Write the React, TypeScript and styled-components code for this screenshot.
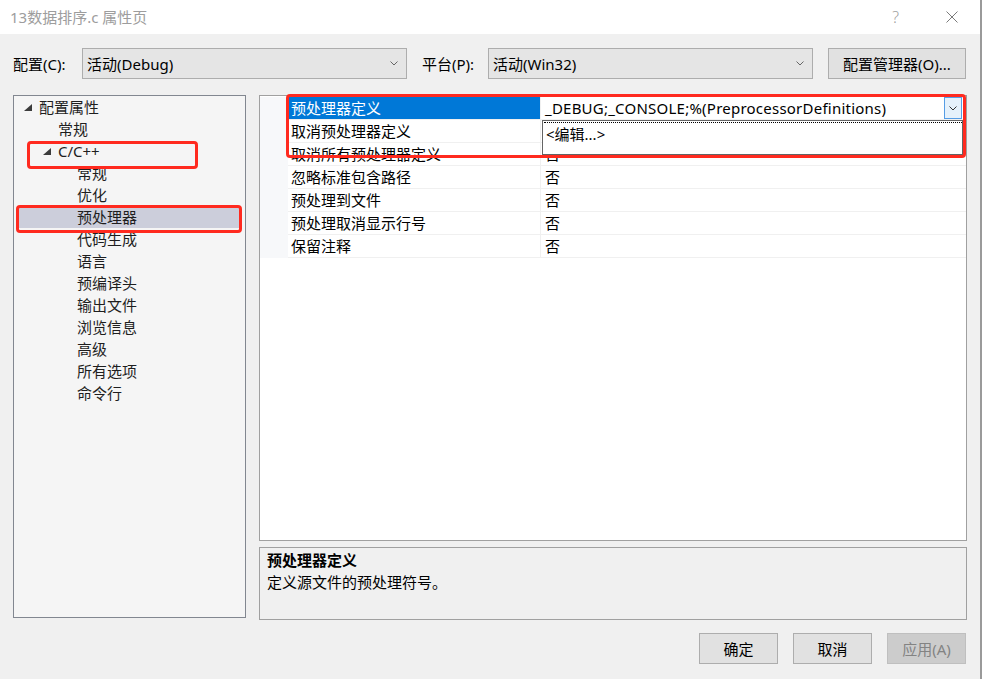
import React from "react";
import styled, { createGlobalStyle } from "styled-components";

const GlobalStyle = createGlobalStyle`
  html, body {
    margin: 0;
    padding: 0;
    background: #f0f0f0;
  }
  body {
    font-family: "Noto Sans", "Noto Sans CJK SC", sans-serif;
    font-size: 15px;
    color: #000;
  }
  * { box-sizing: border-box; }
`;

const Window = styled.div`
  position: relative;
  width: 982px;
  height: 679px;
  background: #f0f0f0;
  border-right: 2px solid #9a9a9a;
  overflow: hidden;
`;

const TitleBar = styled.div`
  height: 34px;
  background: #fff;
  display: flex;
  align-items: center;
  padding-left: 10px;
`;

const Title = styled.div`
  flex: 1;
  color: #9d9d9d;
  font-size: 15px;
  line-height: 20px;
`;

const TitleButtons = styled.div`
  display: flex;
  align-items: center;
  gap: 47px;
  padding-right: 22px;
`;

const HelpGlyph = styled.span`
  color: #a0a0a0;
  font-size: 16px;
  line-height: 20px;
  font-weight: 300;
`;

const ConfigRow = styled.div`
  display: flex;
  align-items: center;
  height: 31px;
  margin-top: 14px;
  padding-left: 13px;
`;

const FieldLabel = styled.span<{ $gap?: number }>`
  margin-left: ${(p) => p.$gap ?? 0}px;
  width: ${(p) => (p.$gap ? 66 : 69)}px;
  line-height: 20px;
`;

const Combo = styled.div<{ $width: number }>`
  width: ${(p) => p.$width}px;
  height: 31px;
  background: #e5e5e5;
  border: 1px solid #adadad;
  display: flex;
  align-items: center;
  padding: 0 8px 0 4px;
  line-height: 20px;
  span {
    flex: 1;
  }
`;

const PushButton = styled.button<{ $width: number; $disabled?: boolean }>`
  width: ${(p) => p.$width}px;
  height: 31px;
  background: ${(p) => (p.$disabled ? "#cccccc" : "#e1e1e1")};
  border: 1px solid ${(p) => (p.$disabled ? "#bfbfbf" : "#adadad")};
  color: ${(p) => (p.$disabled ? "#838383" : "#000")};
  font-family: inherit;
  font-size: 15px;
  line-height: 20px;
  padding: 0;
`;

const Main = styled.div`
  display: flex;
  align-items: flex-start;
  margin-top: 16px;
  padding-left: 13px;
  gap: 13px;
`;

const Tree = styled.div`
  width: 233px;
  height: 523px;
  background: #f5f5f5;
  border: 1px solid #828790;
`;

const TreeRow = styled.div<{ $level: number; $selected?: boolean }>`
  position: relative;
  height: 22px;
  line-height: 22px;
  margin: 0 4px;
  padding-left: ${(p) => 21 + p.$level * 19}px;
  background: ${(p) => (p.$selected ? "#cccedb" : "transparent")};
  color: #1e1e1e;
  display: flex;
  align-items: center;
`;

const Expander = styled.svg`
  width: 8px;
  height: 7px;
  margin-left: -15px;
  margin-right: 7px;
  margin-top: 1px;
`;

const RightColumn = styled.div`
  width: 708px;
  display: flex;
  flex-direction: column;
  gap: 6px;
`;

const PropertyGrid = styled.div`
  position: relative;
  height: 446px;
  background: #fff;
  border: 1px solid #a0a0a0;
  padding-top: 1px;
`;

const PropRow = styled.div`
  display: flex;
  height: 23px;
`;

const Gutter = styled.div`
  width: 28px;
  background: #f7f8fa;
`;

const NameCell = styled.div<{ $selected?: boolean }>`
  width: 253px;
  padding-left: 3px;
  line-height: 22px;
  border-bottom: 1px solid #f0f0f0;
  border-right: 1px solid #f0f0f0;
  background: ${(p) => (p.$selected ? "#0078d7" : "#fff")};
  color: ${(p) => (p.$selected ? "#fff" : "#000")};
  white-space: nowrap;
`;

const ValueCell = styled.div`
  flex: 1;
  display: flex;
  align-items: flex-start;
  padding-left: 4px;
  padding-right: 4px;
  line-height: 22px;
  border-bottom: 1px solid #f0f0f0;
  span {
    flex: 1;
    letter-spacing: 0.23px;
  }
`;

const DropButton = styled.div`
  width: 18px;
  height: 22px;
  background: #e5f1fb;
  border: 1px solid #569de5;
  display: flex;
  align-items: center;
  justify-content: center;
`;

const DropList = styled.div`
  position: absolute;
  left: 282px;
  top: 24px;
  width: 421px;
  height: 35px;
  background: #fff;
  border: 1px solid #646464;
`;

const DropItem = styled.div`
  margin: 1px 0 0 1px;
  height: 22px;
  line-height: 22px;
  padding-left: 2px;
  border-top: 1px dotted #000;
`;

const Description = styled.div`
  height: 73px;
  border: 1px solid #a0a0a0;
  background: #f0f0f0;
  padding: 1px 7px;
  line-height: 22px;
`;

const DescTitle = styled.div`
  font-weight: 700;
`;

const Footer = styled.div`
  display: flex;
  justify-content: flex-end;
  gap: 15px;
  margin-top: 13px;
  padding-right: 14px;
`;

const Callout = styled.div<{ $x: number; $y: number; $w: number; $h: number }>`
  position: absolute;
  left: ${(p) => p.$x}px;
  top: ${(p) => p.$y}px;
  width: ${(p) => p.$w}px;
  height: ${(p) => p.$h}px;
  border: 3px solid #ff2a1f;
  border-radius: 4px;
  pointer-events: none;
`;

const Chevron = ({ color = "#666" }: { color?: string }) => (
  <svg width="8" height="5" viewBox="0 0 8 5">
    <polyline points="0.5,0.5 4,4 7.5,0.5" fill="none" stroke={color} strokeWidth="1" />
  </svg>
);

const Triangle = () => (
  <Expander viewBox="0 0 8 7">
    <polygon points="8,0 8,7 0,7" fill="#3c3c3c" />
  </Expander>
);

type TreeItem = { label: string; level: number; open?: boolean; selected?: boolean };

const treeItems: TreeItem[] = [
  { label: "配置属性", level: 0, open: true },
  { label: "常规", level: 1 },
  { label: "C/C++", level: 1, open: true },
  { label: "常规", level: 2 },
  { label: "优化", level: 2 },
  { label: "预处理器", level: 2, selected: true },
  { label: "代码生成", level: 2 },
  { label: "语言", level: 2 },
  { label: "预编译头", level: 2 },
  { label: "输出文件", level: 2 },
  { label: "浏览信息", level: 2 },
  { label: "高级", level: 2 },
  { label: "所有选项", level: 2 },
  { label: "命令行", level: 2 },
];

const properties = [
  { name: "预处理器定义", value: "_DEBUG;_CONSOLE;%(PreprocessorDefinitions)" },
  { name: "取消预处理器定义", value: "" },
  { name: "取消所有预处理器定义", value: "否" },
  { name: "忽略标准包含路径", value: "否" },
  { name: "预处理到文件", value: "否" },
  { name: "预处理取消显示行号", value: "否" },
  { name: "保留注释", value: "否" },
];

const App: React.FC = () => {
  return (
    <>
      <GlobalStyle />
      <Window>
        <TitleBar>
          <Title>13数据排序.c 属性页</Title>
          <TitleButtons>
            <HelpGlyph>?</HelpGlyph>
            <svg width="12" height="12" viewBox="0 0 12 12">
              <path d="M0.5 0.5 L11.5 11.5 M11.5 0.5 L0.5 11.5" stroke="#7a7a7a" strokeWidth="1" />
            </svg>
          </TitleButtons>
        </TitleBar>

        <ConfigRow>
          <FieldLabel>配置(C):</FieldLabel>
          <Combo $width={325}>
            <span>活动(Debug)</span>
            <Chevron />
          </Combo>
          <FieldLabel $gap={15}>平台(P):</FieldLabel>
          <Combo $width={325}>
            <span>活动(Win32)</span>
            <Chevron />
          </Combo>
          <div style={{ width: 15 }} />
          <PushButton $width={138}>配置管理器(O)...</PushButton>
        </ConfigRow>

        <Main>
          <Tree>
            {treeItems.map((item, i) => (
              <TreeRow key={i} $level={item.level} $selected={item.selected}>
                {item.open && <Triangle />}
                {item.label}
              </TreeRow>
            ))}
          </Tree>

          <RightColumn>
            <PropertyGrid>
              {properties.map((prop, i) => (
                <PropRow key={prop.name}>
                  <Gutter />
                  <NameCell $selected={i === 0}>{prop.name}</NameCell>
                  <ValueCell>
                    <span>{prop.value}</span>
                    {i === 0 && (
                      <DropButton>
                        <Chevron color="#333" />
                      </DropButton>
                    )}
                  </ValueCell>
                </PropRow>
              ))}
              <DropList>
                <DropItem>&lt;编辑...&gt;</DropItem>
              </DropList>
            </PropertyGrid>

            <Description>
              <DescTitle>预处理器定义</DescTitle>
              <div>定义源文件的预处理符号。</div>
            </Description>
          </RightColumn>
        </Main>

        <Footer>
          <PushButton $width={79}>确定</PushButton>
          <PushButton $width={79}>取消</PushButton>
          <PushButton $width={79} $disabled>
            应用(A)
          </PushButton>
        </Footer>

        <Callout $x={27} $y={141} $w={171} $h={28} />
        <Callout $x={16} $y={205} $w={226} $h={28} />
        <Callout $x={286} $y={94} $w={680} $h={64} />
      </Window>
    </>
  );
};

export default App;
